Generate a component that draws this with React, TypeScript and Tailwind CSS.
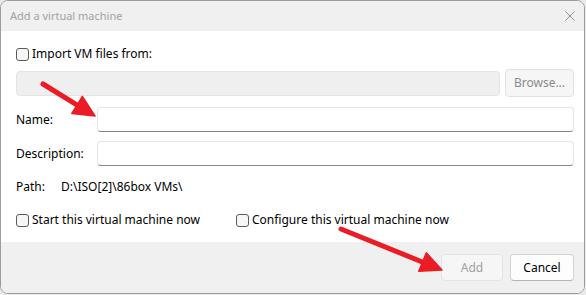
import React from "react";

const font = { fontFamily: '"Noto Sans", "Open Sans", sans-serif' };

function Checkbox({ label }: { label: string }) {
  return (
    <label className="flex items-center gap-[3px] text-[12px] text-black">
      <span className="w-[13px] h-[13px] rounded-[3px] border border-[#5c5c5c] bg-[#f6f6f6] flex-shrink-0" />
      <span>{label}</span>
    </label>
  );
}

function TextBox({ disabled }: { disabled?: boolean }) {
  return (
    <div
      className={
        disabled
          ? "flex-1 h-[25px] rounded-[4px] border border-[#e3e3e3] bg-[#efefef]"
          : "flex-1 h-[25px] rounded-[4px] border border-[#e5e5e5] border-b-[#868686] bg-white"
      }
    />
  );
}

function Arrow({ x1, y1, x2, y2 }: { x1: number; y1: number; x2: number; y2: number }) {
  const dx = x2 - x1;
  const dy = y2 - y1;
  const len = Math.hypot(dx, dy);
  const ux = dx / len;
  const uy = dy / len;
  const headLen = 21;
  const half = 10;
  const bx = x2 - ux * headLen;
  const by = y2 - uy * headLen;
  const pts = [
    [x2, y2],
    [bx - uy * half, by + ux * half],
    [bx + uy * half, by - ux * half],
  ]
    .map((p) => p.join(","))
    .join(" ");
  return (
    <g>
      <line
        x1={x1}
        y1={y1}
        x2={bx + ux * 3}
        y2={by + uy * 3}
        stroke="#ec1c24"
        strokeWidth={5}
        strokeLinecap="round"
      />
      <polygon points={pts} fill="#ec1c24" stroke="#ec1c24" strokeWidth={1.5} strokeLinejoin="round" />
    </g>
  );
}

export default function App() {
  return (
    <div className="w-[586px] h-[295px] bg-[#e9e9e9]" style={font}>
      <div className="relative w-[585px] h-[294px] rounded-[8px] border border-[#9c9c9c] overflow-hidden flex flex-col bg-white">
        {/* Title bar */}
        <div className="h-[30px] flex-shrink-0 bg-[#f0f0f0] flex items-center justify-between pl-[9px] pr-[9px]">
          <span className="text-[11px] text-[#a2a2a2]">Add a virtual machine</span>
          <svg width="10" height="10" viewBox="0 0 10 10">
            <path d="M0.5 0.5 L9.5 9.5 M9.5 0.5 L0.5 9.5" stroke="#8e8e8e" strokeWidth="1" />
          </svg>
        </div>

        {/* Body */}
        <div className="flex-1 flex flex-col pl-[15px] pr-[10px]">
          <div className="mt-[13px] h-[20px] flex items-center">
            <Checkbox label="Import VM files from:" />
          </div>

          <div className="mt-[5px] h-[28px] flex items-center gap-[5px]">
            <TextBox disabled />
            <div className="w-[69px] h-[28px] rounded-[4px] border border-[#e2e2e2] bg-[#f6f6f6] flex items-center justify-center text-[12px] text-[#8a8a8a]">
              Browse...
            </div>
          </div>

          <div className="mt-[10px] h-[25px] flex items-center">
            <span className="w-[81px] text-[12px] text-black">Name:</span>
            <TextBox />
          </div>

          <div className="mt-[9px] h-[25px] flex items-center">
            <span className="w-[81px] text-[12px] text-black">Description:</span>
            <TextBox />
          </div>

          <div className="mt-[11px] h-[20px] flex items-center text-[12px] text-black">
            <span className="w-[45px]">Path:</span>
            <span>D:\ISO[2]\86box VMs\</span>
          </div>

          <div className="mt-[13px] h-[20px] flex items-center">
            <div className="w-[220px]">
              <Checkbox label="Start this virtual machine now" />
            </div>
            <Checkbox label="Configure this virtual machine now" />
          </div>
        </div>

        {/* Footer */}
        <div className="h-[51px] flex-shrink-0 bg-[#f0f0f0] flex items-start justify-end gap-[7px] pt-[12px] pr-[10px]">
          <div className="w-[62px] h-[27px] rounded-[4px] border border-[#e4e4e4] bg-[#f6f6f6] flex items-center justify-center text-[12px] text-[#a0a0a0]">
            Add
          </div>
          <div className="w-[64px] h-[27px] rounded-[4px] border border-[#d3d3d3] border-b-[#b5b5b5] bg-[#fdfdfd] flex items-center justify-center text-[12px] text-black">
            Cancel
          </div>
        </div>

        {/* Annotation arrows */}
        <svg className="absolute left-[-1px] top-[-1px] pointer-events-none" width="586" height="295">
          <Arrow x1={43} y1={84} x2={95} y2={116} />
          <Arrow x1={341} y1={229} x2={442} y2={270} />
        </svg>
      </div>
    </div>
  );
}
